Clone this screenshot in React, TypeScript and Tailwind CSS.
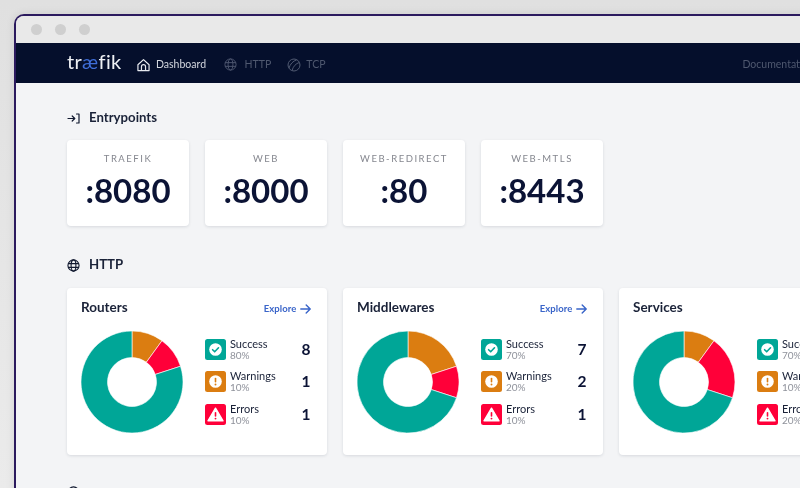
import React from "react";

const TEAL = "#00a697";
const ORANGE = "#db7d11";
const RED = "#ff0039";

function polar(r: number, pct: number): [number, number] {
  const a = (pct / 100) * 2 * Math.PI - Math.PI / 2;
  return [51 + r * Math.cos(a), 51 + r * Math.sin(a)];
}

function slice(from: number, to: number) {
  const [x1, y1] = polar(51, from);
  const [x2, y2] = polar(51, to);
  const [x3, y3] = polar(24.5, to);
  const [x4, y4] = polar(24.5, from);
  const large = to - from > 50 ? 1 : 0;
  return `M${x1} ${y1}A51 51 0 ${large} 1 ${x2} ${y2}L${x3} ${y3}A24.5 24.5 0 ${large} 0 ${x4} ${y4}Z`;
}

function Donut({ w, e }: { w: number; e: number }) {
  return (
    <svg width="102" height="102" viewBox="0 0 102 102" className="shrink-0">
      <path d={slice(0, w)} fill={ORANGE} stroke="#fff" strokeWidth="0.6" />
      <path d={slice(w, w + e)} fill={RED} stroke="#fff" strokeWidth="0.6" />
      <path d={slice(w + e, 100)} fill={TEAL} stroke="#fff" strokeWidth="0.6" />
    </svg>
  );
}

function StatusIcon({ kind }: { kind: "ok" | "warn" | "err" }) {
  const bg = kind === "ok" ? TEAL : kind === "warn" ? ORANGE : RED;
  return (
    <svg width="21" height="21" viewBox="0 0 21 21" className="shrink-0">
      <rect width="21" height="21" rx="2.5" fill={bg} />
      {kind === "err" ? (
        <>
          <path d="M10.5 4.2 L18 16.8 H3 Z" fill="#fff" stroke="#fff" strokeWidth="1.4" strokeLinejoin="round" />
          <rect x="9.7" y="8" width="1.6" height="4.8" rx="0.8" fill={bg} />
          <circle cx="10.5" cy="14.6" r="0.95" fill={bg} />
        </>
      ) : (
        <>
          <circle cx="10.5" cy="10.5" r="6.3" fill="#fff" />
          {kind === "ok" ? (
            <path d="M7.6 10.7 L9.7 12.8 L13.5 8.8" fill="none" stroke={bg} strokeWidth="1.6" strokeLinecap="round" strokeLinejoin="round" />
          ) : (
            <>
              <rect x="9.7" y="6.8" width="1.6" height="4.8" rx="0.8" fill={bg} />
              <circle cx="10.5" cy="13.5" r="0.95" fill={bg} />
            </>
          )}
        </>
      )}
    </svg>
  );
}

function Row({ kind, label, pct, n }: { kind: "ok" | "warn" | "err"; label: string; pct: string; n: number }) {
  return (
    <div className="flex items-center h-[21px] w-full">
      <StatusIcon kind={kind} />
      <div className="ml-[4px] flex flex-col grow min-w-0">
        <span className="text-[11px] leading-[12px] text-[#1a2238] whitespace-nowrap">{label}</span>
        <span className="text-[10px] leading-[11px] text-[#8f929b] whitespace-nowrap">{pct}</span>
      </div>
      <span className="text-[15.5px] font-bold text-[#0b1335] leading-none mt-[1px]">{n}</span>
    </div>
  );
}

function ArrowRight() {
  return (
    <svg width="11" height="10" viewBox="0 0 11 10" fill="none" stroke="#3a65c9" strokeWidth="1.4" strokeLinecap="round" strokeLinejoin="round">
      <path d="M0.8 5H10M6.2 1L10.2 5L6.2 9" />
    </svg>
  );
}

function Globe({ size, color, sw = 1.3 }: { size: number; color: string; sw?: number }) {
  return (
    <svg width={size} height={size} viewBox="0 0 14 14" fill="none" stroke={color} strokeWidth={sw}>
      <circle cx="7" cy="7" r="6" />
      <ellipse cx="7" cy="7" rx="2.6" ry="6" />
      <path d="M1.2 5H12.8M1.2 9H12.8" />
    </svg>
  );
}

function Ball({ color, size, sw, className }: { color: string; size: number; sw: number; className?: string }) {
  return (
    <svg className={className} width={size} height={size} viewBox="0 0 14 14" fill="none" stroke={color} strokeWidth={sw}>
      <circle cx="7" cy="7" r="6" />
      <path d="M9.8 1.8C6 3 3.2 6 2 10M12.2 4.5C9 5.5 6 8.5 5 12.6" />
    </svg>
  );
}

function ChartCard({ title, w, e, rows, explore = true }: {
  title: string;
  w: number;
  e: number;
  rows: [string, string, string];
  explore?: boolean;
}) {
  const [a, b, c] = rows;
  const ns = [100 - w - e, w, e].map((v) => v / 10);
  return (
    <div className="w-[260px] h-[167px] shrink-0 bg-white rounded-[4px] shadow-[0_1px_3px_rgba(20,30,60,0.12)] pl-[14px] pr-[16.5px] pt-[13px]">
      <div className="flex items-center justify-between h-[14px]">
        <span className="text-[13.5px] font-bold text-[#1a2238] leading-none">{title}</span>
        <span className={explore ? "flex items-center gap-[3px] mt-[2px] text-[9.5px] font-bold text-[#3a65c9] tracking-[0.01em]" : "hidden"}>
          Explore <ArrowRight />
        </span>
      </div>
      <div className="flex items-center mt-[15.5px]">
        <Donut w={w} e={e} />
        <div className="ml-[22px] grow flex flex-col gap-[11.5px]">
          <Row kind="ok" label="Success" pct={a} n={ns[0]} />
          <Row kind="warn" label="Warnings" pct={b} n={ns[1]} />
          <Row kind="err" label="Errors" pct={c} n={ns[2]} />
        </div>
      </div>
    </div>
  );
}

function PortCard({ name, port }: { name: string; port: string }) {
  return (
    <div className="w-[122px] h-[86px] bg-white rounded-[4px] shadow-[0_1px_3px_rgba(20,30,60,0.12)] flex flex-col items-center pt-[13px]">
      <span className="text-[9.5px] tracking-[0.16em] text-[#85878f] leading-[12px] whitespace-nowrap">{name}</span>
      <span className="text-[33px] font-bold text-[#0b1335] leading-[40px] mt-[5px]">{port}</span>
    </div>
  );
}

export default function App() {
  return (
    <div
      className="w-[800px] h-[488px] overflow-hidden bg-gradient-to-b from-[#e0e0e0] to-[#ebebeb] pl-[14px] pt-[14px] blur-[0.35px]"
      style={{ fontFamily: '"Lato", "Noto Sans", sans-serif' }}
    >
      <div className="w-[900px] h-[520px] rounded-tl-[10px] border-l-2 border-t-2 border-[#2b1a5e] overflow-hidden shadow-[0_0_8px_rgba(0,0,0,0.1)]">
        <div className="h-[27px] bg-[#e9e9e9] flex items-center gap-[13px] pl-[15px]">
          <span className="w-[11px] h-[11px] rounded-full bg-[#cfcfcf]" />
          <span className="w-[11px] h-[11px] rounded-full bg-[#cfcfcf]" />
          <span className="w-[11px] h-[11px] rounded-full bg-[#cfcfcf]" />
        </div>
        <div className="h-[40px] bg-[#050f2c] flex items-center pl-[51px] pt-[3px]">
          <span className="text-[20px] tracking-[0.02em] text-[#eef0f4] leading-none mb-[7px] w-[70px]" style={{ fontWeight: 400 }}>
            tr<span className="text-[#3f6ed8]">æ</span>fik
          </span>
          <svg width="13" height="14" viewBox="0 0 14 14" fill="none" stroke="#e6e8ee" strokeWidth="1.3" strokeLinejoin="round">
            <path d="M1 6.8L7 1.2L13 6.8V13H1Z" />
            <path d="M4.8 13V8.8A2.2 2.2 0 0 1 9.2 8.8V13" />
          </svg>
          <span className="ml-[6px] text-[10.5px] text-[#d4d7df]">Dashboard</span>
          <span className="ml-[17.5px] flex"><Globe size={13} color="#515a72" sw={1} /></span>
          <span className="ml-[8px] text-[10.5px] text-[#4f586f]">HTTP</span>
          <Ball className="ml-[16px]" color="#515a72" size={14} sw={1} />
          <span className="ml-[5px] text-[10.5px] text-[#4f586f]">TCP</span>
          <span className="ml-[417px] text-[10.5px] text-[#4f586f]">Documentation</span>
        </div>
        <div className="h-[460px] bg-[#f3f4f6] pl-[51px] pt-[28px]">
          <div className="flex items-center h-[14px]">
            <svg width="13" height="11" viewBox="0 0 13 11" fill="none" stroke="#10182f" strokeWidth="1.2" strokeLinecap="round" strokeLinejoin="round">
              <path d="M1 5.5H7.5M5.2 3L7.8 5.5L5.2 8M9.5 1H12V10H9.5" />
            </svg>
            <span className="ml-[9px] text-[13.2px] font-bold text-[#1a2238]">Entrypoints</span>
          </div>
          <div className="flex gap-[16px] mt-[15px]">
            <PortCard name="TRAEFIK" port=":8080" />
            <PortCard name="WEB" port=":8000" />
            <PortCard name="WEB-REDIRECT" port=":80" />
            <PortCard name="WEB-MTLS" port=":8443" />
          </div>
          <div className="flex items-center h-[14px] mt-[32px]">
            <Globe size={13} color="#10182f" sw={1.2} />
            <span className="ml-[9px] text-[13.2px] font-bold text-[#1a2238]">HTTP</span>
          </div>
          <div className="flex gap-[16px] mt-[16px]">
            <ChartCard title="Routers" w={10} e={10} rows={["80%", "10%", "10%"]} />
            <ChartCard title="Middlewares" w={20} e={10} rows={["70%", "20%", "10%"]} />
            <ChartCard title="Services" w={10} e={20} rows={["70%", "10%", "20%"]} explore={false} />
          </div>
          <div className="mt-[31px]">
            <Ball color="#10182f" size={13} sw={1.2} />
          </div>
        </div>
      </div>
    </div>
  );
}
